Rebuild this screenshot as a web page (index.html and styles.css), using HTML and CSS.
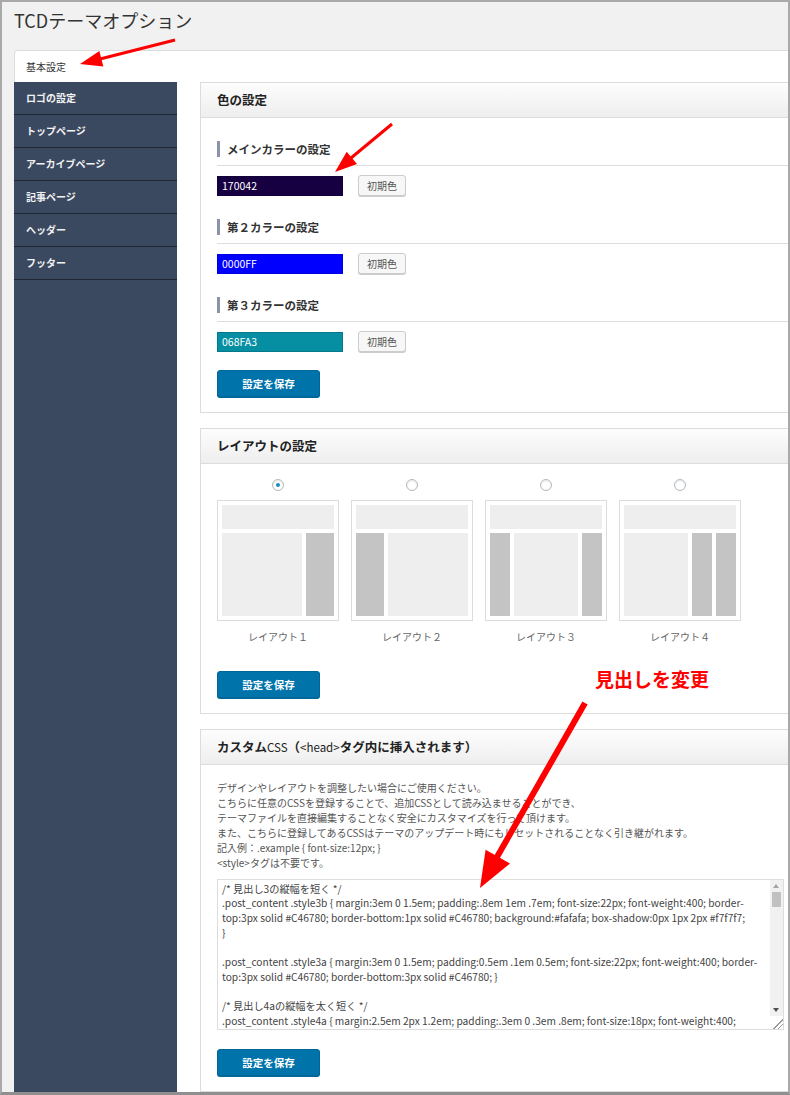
FILE: index.html
```html
<!DOCTYPE html>
<html lang="ja">
<head>
    <meta charset="UTF-8">
    <title>TCDテーマオプション</title>
    <link rel="stylesheet" href="styles.css">
</head>
<body>
    <div class="screen">
        <h1 class="page-title">TCDテーマオプション</h1>

        <div class="options">
            <div class="tab-bar">基本設定</div>
            <div class="options-body">
                <ul class="side-menu">
                    <li>ロゴの設定</li>
                    <li>トップページ</li>
                    <li>アーカイブページ</li>
                    <li>記事ページ</li>
                    <li>ヘッダー</li>
                    <li>フッター</li>
                </ul>

                <div class="options-main">
                    <!-- 色の設定 -->
                    <div class="panel">
                        <h3 class="panel-title">色の設定</h3>
                        <div class="panel-body">
                            <h4 class="sub-title"><span>メインカラーの設定</span></h4>
                            <div class="color-row">
                                <div class="color-value main-color">170042</div>
                                <button class="reset-btn">初期色</button>
                            </div>
                            <h4 class="sub-title"><span>第２カラーの設定</span></h4>
                            <div class="color-row">
                                <div class="color-value second-color">0000FF</div>
                                <button class="reset-btn">初期色</button>
                            </div>
                            <h4 class="sub-title"><span>第３カラーの設定</span></h4>
                            <div class="color-row">
                                <div class="color-value third-color">068FA3</div>
                                <button class="reset-btn">初期色</button>
                            </div>
                            <button class="save-btn">設定を保存</button>
                        </div>
                    </div>

                    <!-- レイアウトの設定 -->
                    <div class="panel">
                        <h3 class="panel-title">レイアウトの設定</h3>
                        <div class="panel-body">
                            <div class="layout-list">
                                <div class="layout-item">
                                    <span class="radio checked"></span>
                                    <div class="layout-box">
                                        <div class="lb-head"></div>
                                        <div class="lb-body">
                                            <div class="lb-main"></div>
                                            <div class="lb-side wide"></div>
                                        </div>
                                    </div>
                                    <div class="layout-name">レイアウト１</div>
                                </div>
                                <div class="layout-item">
                                    <span class="radio"></span>
                                    <div class="layout-box">
                                        <div class="lb-head"></div>
                                        <div class="lb-body">
                                            <div class="lb-side wide"></div>
                                            <div class="lb-main"></div>
                                        </div>
                                    </div>
                                    <div class="layout-name">レイアウト２</div>
                                </div>
                                <div class="layout-item">
                                    <span class="radio"></span>
                                    <div class="layout-box">
                                        <div class="lb-head"></div>
                                        <div class="lb-body">
                                            <div class="lb-side"></div>
                                            <div class="lb-main"></div>
                                            <div class="lb-side"></div>
                                        </div>
                                    </div>
                                    <div class="layout-name">レイアウト３</div>
                                </div>
                                <div class="layout-item">
                                    <span class="radio"></span>
                                    <div class="layout-box">
                                        <div class="lb-head"></div>
                                        <div class="lb-body">
                                            <div class="lb-main"></div>
                                            <div class="lb-side"></div>
                                            <div class="lb-side"></div>
                                        </div>
                                    </div>
                                    <div class="layout-name">レイアウト４</div>
                                </div>
                            </div>
                            <button class="save-btn layout-save">設定を保存</button>
                        </div>
                    </div>

                    <!-- カスタムCSS -->
                    <div class="panel">
                        <h3 class="panel-title">カスタム<span class="thin">CSS</span>（<span class="thin">&lt;head&gt;</span>タグ内に挿入されます）</h3>
                        <div class="panel-body">
                            <p class="css-note">
                                デザインやレイアウトを調整したい場合にご使用ください。<br>
                                こちらに任意のCSSを登録することで、追加CSSとして読み込ませることができ、<br>
                                テーマファイルを直接編集することなく安全にカスタマイズを行って頂けます。<br>
                                また、こちらに登録してあるCSSはテーマのアップデート時にもリセットされることなく引き継がれます。<br>
                                記入例：.example { font-size:12px; }<br>
                                &lt;style&gt;タグは不要です。
                            </p>
                            <div class="css-editor">
                                <div class="css-code">
                                    <div>/* 見出し3の縦幅を短く */</div>
                                    <div>.post_content .style3b { margin:3em 0 1.5em; padding:.8em 1em .7em; font-size:22px; font-weight:400; border-</div>
                                    <div>top:3px solid #C46780; border-bottom:1px solid #C46780; background:#fafafa; box-shadow:0px 1px 2px #f7f7f7;</div>
                                    <div>}</div>
                                    <div>&nbsp;</div>
                                    <div>.post_content .style3a { margin:3em 0 1.5em; padding:0.5em .1em 0.5em; font-size:22px; font-weight:400; border-</div>
                                    <div>top:3px solid #C46780; border-bottom:3px solid #C46780; }</div>
                                    <div>&nbsp;</div>
                                    <div>/* 見出し4aの縦幅を太く短く */</div>
                                    <div>.post_content .style4a { margin:2.5em 2px 1.2em; padding:.3em 0 .3em .8em; font-size:18px; font-weight:400;</div>
                                </div>
                                <div class="css-scroll">
                                    <div class="sb-up"></div>
                                    <div class="sb-thumb"></div>
                                    <div class="sb-track"></div>
                                    <div class="sb-down"></div>
                                    <div class="sb-grip"></div>
                                </div>
                            </div>
                            <button class="save-btn css-save">設定を保存</button>
                        </div>
                    </div>
                </div>
            </div>
        </div>

        <!-- annotations drawn on top of the screenshot -->
        <div class="note-label">見出しを変更</div>
        <svg class="arrows" width="790" height="1095" viewBox="0 0 790 1095">
            <g fill="#f00" stroke="#f00">
                <line x1="175" y1="40" x2="100" y2="59" stroke-width="3"/>
                <polygon points="80,64 103.3,66.4 99.4,50.9" stroke="none"/>
                <line x1="392" y1="124" x2="351" y2="158" stroke-width="3"/>
                <polygon points="335,172 357,164 346.7,151.7" stroke="none"/>
                <line x1="585" y1="703" x2="497" y2="857" stroke-width="6"/>
                <polygon points="480,888 510,863.6 485.6,849.8" stroke="none"/>
            </g>
        </svg>
    </div>
</body>
</html>
```

FILE: styles.css
```css
body {
    margin: 0;
    background: #fff;
    font-family: "Noto Sans CJK JP", "Noto Sans", sans-serif;
    color: #333;
}

.screen {
    position: relative;
    width: 790px;
    height: 1095px;
    box-sizing: border-box;
    border: 2px solid #a9a9a9;
    border-bottom: 3px solid #8f8f8f;
    background: #f1f1f1;
    overflow: hidden;
}

.page-title {
    margin: 0;
    height: 48px;
    box-sizing: border-box;
    padding: 6px 0 0 12px;
    font-size: 18px;
    font-weight: normal;
    line-height: 24px;
    color: #333;
}

.options {
    width: 800px;
    margin-left: 12px;
}

.tab-bar {
    height: 32px;
    box-sizing: border-box;
    padding-left: 11px;
    border: 1px solid #dcdcdc;
    border-bottom: none;
    border-radius: 4px 0 0 0;
    background: #fff;
    font-size: 10px;
    line-height: 31px;
    color: #333;
}

.options-body {
    display: flex;
    height: 1020px;
    background: #fff;
}

/* left menu */
.side-menu {
    flex: none;
    width: 163px;
    margin: 0;
    padding: 0;
    list-style: none;
    background: #3b4960;
}

.side-menu li {
    height: 32px;
    padding-left: 12px;
    border-bottom: 1px solid #1f2631;
    font-size: 10px;
    font-weight: bold;
    line-height: 32px;
    color: #f2f2f2;
}

.options-main {
    flex: 1;
    padding-left: 23px;
}

/* panels */
.panel {
    margin-bottom: 15px;
    border: 1px solid #dcdcdc;
    background: #fff;
}

.panel-title {
    height: 34px;
    margin: 0;
    padding-left: 16px;
    border-bottom: 1px solid #dcdcdc;
    background: linear-gradient(#fdfdfd, #eeeeee);
    font-size: 12.5px;
    font-weight: bold;
    line-height: 34px;
    color: #222;
}

.panel-title .thin {
    font-weight: normal;
    font-size: 11.5px;
}

.panel-body {
    padding: 0 16px 15px;
}

.sub-title {
    margin: 23px 0 9px;
    padding-bottom: 8px;
    border-bottom: 1px solid #dedede;
    font-size: 11.5px;
    font-weight: bold;
    line-height: 16px;
    color: #333;
}

.sub-title span {
    display: block;
    padding-left: 7px;
    border-left: 3px solid #8a93a8;
}

.color-row {
    display: flex;
    align-items: center;
    gap: 15px;
}

.color-value {
    width: 126px;
    height: 20px;
    box-sizing: border-box;
    padding-left: 4px;
    border: 1px solid rgba(0, 0, 0, 0.15);
    font-size: 10.5px;
    line-height: 18px;
    color: #fff;
}

.main-color { background: #170042; }
.second-color { background: #0000ff; }
.third-color { background: #068fa3; }

.reset-btn {
    width: 48px;
    height: 21px;
    padding: 0;
    border: 1px solid #ccc;
    border-radius: 3px;
    background: #f7f7f7;
    box-shadow: 0 1px 0 #ccc;
    font-family: inherit;
    font-size: 10px;
    color: #555;
}

.save-btn {
    display: block;
    width: 103px;
    height: 27px;
    margin-top: 18px;
    padding: 0;
    border: 1px solid #006799;
    border-radius: 3px;
    background: #0073aa;
    box-shadow: 0 1px 0 #006799;
    font-family: inherit;
    font-size: 10.5px;
    font-weight: bold;
    color: #fff;
}

.layout-save {
    margin-top: 27px;
}

.css-save {
    margin-top: 19px;
}

/* layout choices */
.layout-list {
    display: flex;
    gap: 12px;
    margin-top: 15px;
}

.layout-item {
    display: flex;
    flex-direction: column;
    align-items: center;
    width: 122px;
}

.radio {
    display: flex;
    align-items: center;
    justify-content: center;
    width: 12px;
    height: 12px;
    box-sizing: border-box;
    border: 1px solid #b4b9be;
    border-radius: 50%;
    background: #fff;
    box-shadow: inset 0 1px 2px rgba(0, 0, 0, 0.1);
}

.radio.checked::before {
    content: "";
    width: 4px;
    height: 4px;
    border-radius: 50%;
    background: #1e8cbe;
}

.layout-box {
    display: flex;
    flex-direction: column;
    gap: 4px;
    width: 122px;
    height: 121px;
    margin-top: 9px;
    box-sizing: border-box;
    padding: 4px;
    border: 1px solid #dcdcdc;
}

.lb-head {
    height: 24px;
    background: #eee;
}

.lb-body {
    flex: 1;
    display: flex;
    gap: 4px;
}

.lb-main {
    flex: 1;
    background: #eee;
}

.lb-side {
    width: 20px;
    background: #c4c4c4;
}

.lb-side.wide {
    width: 28px;
}

.layout-name {
    margin-top: 8px;
    font-size: 10px;
    line-height: 15px;
    color: #666;
}

/* custom css */
.css-note {
    margin: 15px 0 0;
    font-size: 10px;
    line-height: 15px;
    color: #555;
}

.css-editor {
    display: flex;
    width: 567px;
    height: 151px;
    margin-top: 9px;
    box-sizing: border-box;
    border: 1px solid #ddd;
}

.css-code {
    flex: 1;
    padding: 1.5px 0 0 4px;
    overflow: hidden;
    white-space: nowrap;
    font-size: 10.2px;
    line-height: 14.7px;
    color: #444;
}

.css-scroll {
    display: flex;
    flex-direction: column;
    width: 13px;
    background: #f1f1f1;
}

.sb-up,
.sb-down {
    position: relative;
    height: 12px;
}

.sb-up::before,
.sb-down::before {
    content: "";
    position: absolute;
    left: 3px;
    top: 4px;
    border-left: 3px solid transparent;
    border-right: 3px solid transparent;
}

.sb-up::before {
    border-bottom: 4px solid #a3a3a3;
}

.sb-down::before {
    border-top: 4px solid #505050;
}

.sb-thumb {
    height: 15px;
    margin: 0 2px;
    background: #c1c1c1;
}

.sb-track {
    flex: 1;
}

.sb-grip {
    height: 13px;
    background: #fff linear-gradient(135deg, transparent 60%, #999 60%, #999 66%, transparent 66%, transparent 78%, #999 78%, #999 84%, transparent 84%);
}

/* annotations */
.note-label {
    position: absolute;
    left: 593px;
    top: 666px;
    font-size: 19px;
    font-weight: bold;
    line-height: 22px;
    color: #f00;
}

.arrows {
    position: absolute;
    left: -2px;
    top: -2px;
    pointer-events: none;
}
```
